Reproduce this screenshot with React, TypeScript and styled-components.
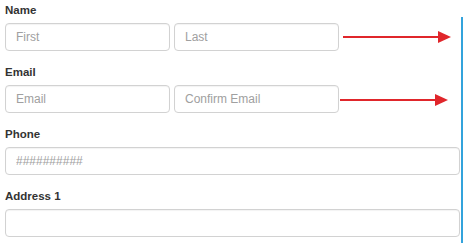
import styled, { createGlobalStyle } from 'styled-components';

const GlobalStyle = createGlobalStyle`
  html, body {
    margin: 0;
    padding: 0;
    background: #ffffff;
  }
  body {
    font-family: 'Liberation Sans', Arial, sans-serif;
  }
  * {
    box-sizing: border-box;
  }
`;

function Arrow({ width }: { width: number }) {
  return (
    <ArrowSvg width={width} height={14} viewBox={`0 0 ${width} 14`}>
      <line x1={0} y1={7} x2={width - 12} y2={7} stroke="#e0262b" strokeWidth={2} />
      <polygon points={`${width - 13},1 ${width},7 ${width - 13},13`} fill="#e0262b" />
    </ArrowSvg>
  );
}

export default function App() {
  return (
    <>
      <GlobalStyle />
      <Page>
        <Form>
          <Group>
            <Label>Name</Label>
            <Row>
              <Input $width={165} placeholder="First" />
              <Input $width={165} placeholder="Last" />
              <ArrowSlot $offset={4}>
                <Arrow width={108} />
              </ArrowSlot>
            </Row>
          </Group>
          <Group>
            <Label>Email</Label>
            <Row>
              <Input $width={165} placeholder="Email" />
              <Input $width={165} placeholder="Confirm Email" />
              <ArrowSlot $offset={1} $shift={1}>
                <Arrow width={108} />
              </ArrowSlot>
            </Row>
          </Group>
          <Group>
            <Label>Phone</Label>
            <Input placeholder="##########" />
          </Group>
          <Group>
            <Label>Address 1</Label>
            <Input />
          </Group>
        </Form>
        <Divider />
      </Page>
    </>
  );
}

const Page = styled.div`
  display: flex;
  align-items: stretch;
  height: 243px;
  padding-left: 5px;
  overflow: hidden;
`;

const Form = styled.div`
  display: flex;
  flex-direction: column;
  width: 455px;
  padding-top: 3px;
`;

const Group = styled.div`
  display: flex;
  flex-direction: column;
  margin-bottom: 14px;
`;

const Label = styled.label`
  height: 15px;
  margin-bottom: 5px;

  color: #333333;
  font-weight: bold;
  font-size: 11.5px;
  line-height: 15px;
`;

const Row = styled.div`
  display: flex;
  align-items: center;
  gap: 4px;
`;

const Input = styled.input<{ $width?: number }>`
  width: ${({ $width }) => ($width ? `${$width}px` : '100%')};
  height: 28px;
  padding: 0 10px;
  border: 1px solid #d2d2d2;
  border-radius: 4px;
  box-shadow: inset 0 1px 1px rgba(0, 0, 0, 0.05);

  color: #555555;
  font-family: 'Liberation Sans', Arial, sans-serif;
  font-size: 12px;
  outline: none;

  &::placeholder {
    color: #a0a0a0;
  }
`;

const ArrowSlot = styled.div<{ $offset: number; $shift?: number }>`
  display: flex;
  margin-left: ${({ $offset }) => $offset - 4}px;
  margin-top: ${({ $shift }) => ($shift ?? 0) * 2}px;
`;

const ArrowSvg = styled.svg`
  display: block;
`;

const Divider = styled.div`
  width: 2px;
  margin-top: 17px;
  margin-left: 1px;

  background: #33a3dc;
`;
